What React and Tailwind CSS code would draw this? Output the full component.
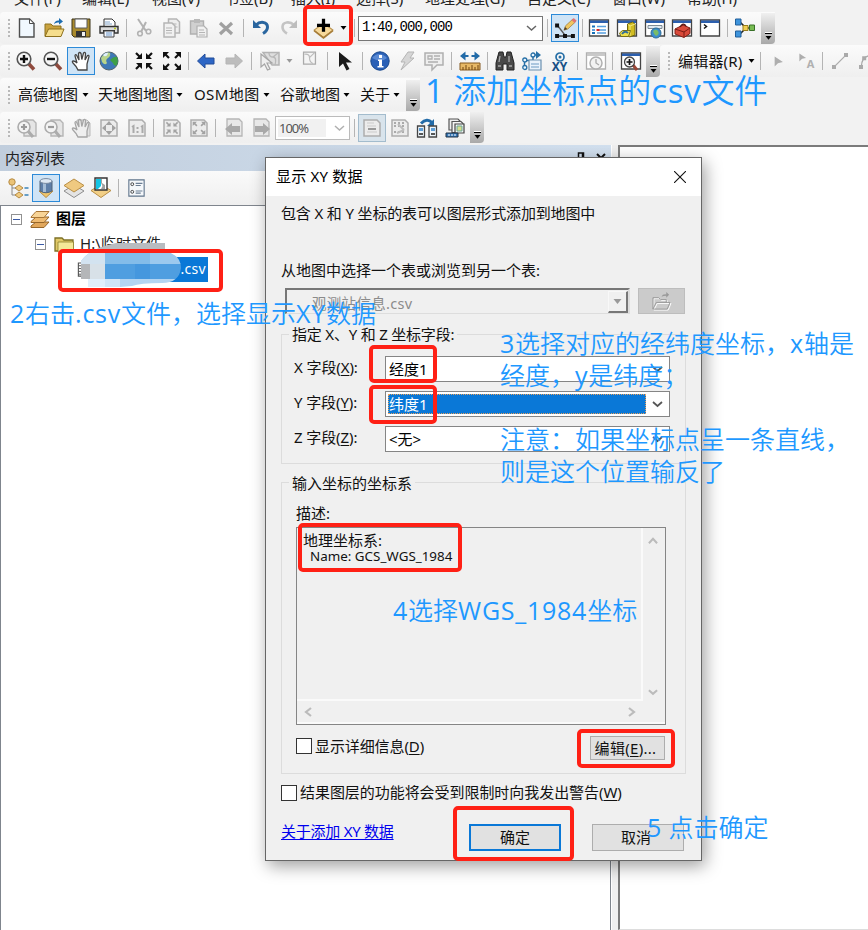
import React from "react";

const UI = "font-['Noto_Sans','Noto_Sans_CJK_SC',sans-serif]";
const NOTE = "font-['Open_Sans','Noto_Sans_CJK_SC',sans-serif]";

/* ---------- small building blocks ---------- */

function Ico({ children, className = "w-5 h-5" }) {
  return (
    <svg viewBox="0 0 20 20" className={`${className} shrink-0 overflow-visible`} fill="none">
      {children}
    </svg>
  );
}

function Slot({ w = "w-7", children }) {
  return <div className={`${w} flex h-full shrink-0 items-center justify-center`}>{children}</div>;
}

function Sep({ w = "w-[7px]" }) {
  return (
    <div className={`${w} flex h-full shrink-0 items-center justify-center`}>
      <div className="h-[18px] w-px bg-[#b4b4b4]" />
    </div>
  );
}

function Grip() {
  return (
    <div className="flex h-full w-[13px] shrink-0 flex-col items-center justify-center gap-[2px] pl-[5px]">
      {[0, 1, 2, 3, 4].map((i) => (
        <div key={i} className="size-[2px] bg-[#b9b9b9]" />
      ))}
    </div>
  );
}

function Caret({ color = "#000" }) {
  return (
    <svg viewBox="0 0 6 4" className="h-1 w-[7px] shrink-0">
      <path d="M0 0h6L3 3.8z" fill={color} />
    </svg>
  );
}

function Chevron({ className = "h-[6px] w-[11px]", color = "#666", d = "M1 1l4.5 4L10 1", sw = 1.5 }) {
  return (
    <svg viewBox="0 0 11 6" className={`${className} shrink-0 overflow-visible`} fill="none">
      <path d={d} stroke={color} strokeWidth={sw} />
    </svg>
  );
}

function Overflow() {
  return (
    <div className="flex h-[31px] w-[14px] shrink-0 flex-col items-center justify-end self-end rounded-br-sm bg-gradient-to-b from-[#f0f0f0] to-[#a9a9a9] pb-1">
      <div className="mb-[2px] h-[2px] w-[7px] border-t border-white bg-black" />
      <Caret />
    </div>
  );
}

function Pressed({ children, soft }) {
  return (
    <div
      className={`flex h-[28px] w-[28px] items-center justify-center border ${
        soft ? "border-[#a3bccd] bg-[#d9e4ec]" : "border-[#2c8ad8] bg-[#cfe4f6]"
      }`}
    >
      {children}
    </div>
  );
}

/* ---------- icons ---------- */

const NewDoc = () => (
  <Ico>
    <path d="M2.5 1h10l4.500 4.500V19H2.500z" fill="#f1f8fe" stroke="#4d4d4d" strokeWidth="1.400" />
    <path d="M12.500 1v4.500H17z" fill="#fff" stroke="#4d4d4d" />
  </Ico>
);
const OpenFolder = () => (
  <Ico>
    <path d="M1 18V6h6l2 2h8v10z" fill="#c9a23f" stroke="#8d701d" />
    <path d="M1 18.500L4.500 11H20l-3 7.500z" fill="#f5dd8c" stroke="#8d701d" />
    <path d="M10 6q1-4 5-3.500V0l4 3.500-4 3V4.500q-3-.5-5 1.500z" fill="#1d6db0" />
  </Ico>
);
const Save = () => (
  <Ico>
    <path d="M1 1h18v18H3l-2-2z" fill="#a98a2c" stroke="#3c3518" />
    <path d="M4 1h12v9H4z" fill="#fbfbfb" stroke="#5b5b5b" />
    <path d="M5 13h10v6H5z" fill="#333" />
    <path d="M11 14h3v4h-3z" fill="#f1f1f1" />
  </Ico>
);
const Printer = () => (
  <Ico>
    <path d="M5 8V1h8l3 3v5" fill="#fff" stroke="#333" />
    <path d="M6 4h5M6 6h7" stroke="#82a4c8" />
    <path d="M1 8.500h18V15H1z" fill="#dcdcdc" stroke="#333" strokeWidth="1.400" />
    <path d="M4 12h12v3H4z" fill="#333" />
    <path d="M5 13h10v6H5z" fill="#f4f8ff" stroke="#444" />
    <path d="M7 15h6M7 17h6" stroke="#6a94c5" />
    <path d="M15 10.500h2" stroke="#b8c61c" strokeWidth="1.500" />
  </Ico>
);
const Cut = () => (
  <Ico>
    <path d="M4 1l8 12M12 4l-5 10" stroke="#b2b2b2" strokeWidth="2" />
    <circle cx="6" cy="15.500" r="2.300" stroke="#b2b2b2" strokeWidth="1.600" />
    <circle cx="14.500" cy="13.500" r="2.300" stroke="#b2b2b2" strokeWidth="1.600" />
  </Ico>
);
const Copy = () => (
  <Ico>
    <path d="M6.500 1h8l3 3v11h-11z" fill="#eee" stroke="#b5b5b5" strokeWidth="1.500" />
    <path d="M8.500 6h6M8.500 9h7" stroke="#b5b5b5" />
    <path d="M2 5h8l3 3v11H2z" fill="#f1f1f1" stroke="#b5b5b5" strokeWidth="1.500" />
    <path d="M4 10h6M4 12.500h6M4 15h6" stroke="#b5b5b5" />
  </Ico>
);
const Paste = () => (
  <Ico>
    <path d="M1.500 3h13v13h-13z" fill="#d0d0d0" stroke="#b0b0b0" strokeWidth="1.400" />
    <path d="M5 1h6v4H5z" fill="#b9b9b9" />
    <path d="M8 8h7l3 3v8H8z" fill="#f0f0f0" stroke="#b0b0b0" strokeWidth="1.200" />
    <path d="M10 12h5M10 14.500h6M10 17h6" stroke="#b5b5b5" />
  </Ico>
);
const Del = () => (
  <Ico>
    <path d="M4 5l12 11M16 5L4 16" stroke="#a0a0a0" strokeWidth="3.200" />
  </Ico>
);
const Undo = () => (
  <Ico>
    <path d="M5 7C9 3 16.500 3.500 16.500 9q0 4-4.500 6.500" stroke="#2a669f" strokeWidth="3" />
    <path d="M2 2v8h8z" fill="#2a669f" />
  </Ico>
);
const Redo = () => (
  <Ico>
    <path d="M15 7C11 3 3.500 3.500 3.500 9q0 4 4.500 6.500" stroke="#c4c4c4" strokeWidth="2.600" />
    <path d="M18 2v8h-8z" fill="#bdbdbd" />
  </Ico>
);
const AddData = () => (
  <Ico className="h-[21px] w-[21px]">
    <path d="M1 11.500L10 5l9 6.500-9 7z" fill="#f7d99a" stroke="#b7904e" />
    <path d="M1 12l9 7 9-7" stroke="#a77d38" strokeWidth="1.400" />
    <path d="M10 .8v12.400M3.800 7h12.400" stroke="#000" strokeWidth="3.100" />
  </Ico>
);
const EditSketch = () => (
  <Ico className="h-[22px] w-[22px]">
    <path d="M3 7.500l7 9" stroke="#555" strokeWidth="1.300" />
    <path d="M2 17.300h16" stroke="#222" strokeWidth="1.200" />
    <path d="M1 6h3.600v3.600H1zM1 15.500h3.600v3.600H1zM8.200 15.500h3.600v3.600H8.200zM15.400 15.500H19v3.600h-3.600z" fill="#111" />
    <path d="M9 12l1.500-4L17 2l2.500 2.500-7 6.500z" fill="#efc660" stroke="#937030" strokeWidth=".6" />
    <path d="M16 2.800L18 .8l2.600 2.600-2 2z" fill="#e07474" />
    <path d="M9 12l1-3 2 2z" fill="#4a3b28" />
  </Ico>
);
const Frame = ({ children, bar = "#2c5fae", edge = "#444" }) => (
  <Ico>
    <path d="M.5 2h19v16H.5z" fill="#fff" stroke={edge} strokeWidth="1.300" />
    <path d="M1 2.500h18v2.500H1z" fill={bar} />
    {children}
  </Ico>
);
const TocWin = () => (
  <Frame>
    <path d="M3 8.500h3M3 15h3" stroke="#1771ba" strokeWidth="2" />
    <path d="M3 12h3" stroke="#58a0df" strokeWidth="2" />
    <path d="M8 8.500h9M8 12h9M8 15h9" stroke="#58a0df" strokeWidth="1.700" />
    <path d="M7.500 12h3" stroke="#d22" strokeWidth="2" />
  </Frame>
);
const CatalogWin = () => (
  <Frame>
    <path d="M10.500 6l5-2 2.500 2v11l-5.500 2-2-2z" fill="#d2bd22" stroke="#6e650c" />
    <path d="M11 6.500l2 1.500v10M13 8l5-2" stroke="#f3e87c" />
    <path d="M2.500 15l3-2.500h8l-2 6H4z" fill="#efe04a" stroke="#77701a" />
    <path d="M5 16q3-4 6-1" stroke="#336f99" strokeWidth="2" />
  </Frame>
);
const SearchWin = () => (
  <Frame>
    <path d="M3 7.500h14v3H3z" fill="#dfe9f2" stroke="#7e8a93" />
    <circle cx="11" cy="15" r="5" fill="#3b8dcf" stroke="#2c6b97" />
    <path d="M8 13q3-3 5 0t-2 5q-2-1-3-5z" fill="#79bc67" />
  </Frame>
);
const ToolboxWin = () => (
  <Frame>
    <path d="M3 11l8-4 7 3v5.500l-6 4-9-3.500z" fill="#d94a3a" stroke="#802118" />
    <path d="M3 11l9 3 6-4M12 14v5" stroke="#7b1c14" />
    <path d="M8 9q3-5 6-1" stroke="#5d1711" strokeWidth="1.300" />
  </Frame>
);
const PythonWin = () => (
  <Frame>
    <path d="M4 6.500L6.500 8.500 4 10.500" stroke="#111" strokeWidth="1.500" />
  </Frame>
);
const Model = () => (
  <Ico>
    <path d="M5 4l6 6-6 6M10 10h6" stroke="#222" strokeWidth="1.500" />
    <path d="M.5 1h5.500v6h-5.500zM.5 13h5.500v6h-5.500z" fill="#3e94dc" stroke="#205f9a" />
    <path d="M8 7.500h5v5H8z" fill="#f0ce51" stroke="#977c1a" />
    <path d="M14.500 7h5v5.500h-5z" fill="#78bc52" stroke="#387028" />
  </Ico>
);

const Zoom = ({ plus }) => (
  <Ico>
    <path d="M12 12l6 6.500" stroke="#8f4a3d" strokeWidth="3.600" />
    <circle cx="8" cy="8" r="6.800" fill="#f6f6f6" stroke="#555" strokeWidth="1.600" />
    <path d={plus ? "M4 8h8M8 4v8" : "M4 8h8"} stroke="#111" strokeWidth="2.400" />
  </Ico>
);
const handPath =
  "M7 19q-1-3-5-7-1.500-2 .5-2 2 .3 3.500 2L4 5q0-2 1.500-1L8 9 7.500 2.500Q8.500.500 10 2.500l.8 6L12.500 2q1.500-1.500 2 .5L14 9l2.500-4.500q1.500-.7 1.500 1l-2 7.500V19z";
const Hand = () => (
  <Ico>
    <path d={handPath} fill="#fff" stroke="#444" strokeWidth="1.300" />
  </Ico>
);
const Globe = () => (
  <Ico>
    <circle cx="10" cy="10" r="9" fill="#3e78b6" stroke="#51626e" />
    <path d="M2 7q5-7 9-5 1 3-2 5-3 2-1 5-2 3-5-1z" fill="#b8d48a" />
    <path d="M11 9q4-4 7-3 2 5-1 9-3-1-3-3z" fill="#3e9f46" />
    <path d="M4 4q3-3 5-2-1 4-4 3z" fill="#dff0ff" />
  </Ico>
);
const ArrowsIn = ({ c = "#111" }) => (
  <>
    <path d="M2 2l4 4M18 2l-4 4M2 18l4-4M18 18l-4-4" stroke={c} strokeWidth="2.200" />
    <path d="M8 2v6H2zM12 2v6h6zM8 18v-6H2zM12 18v-6h6z" fill={c} />
  </>
);
const ArrowsOut = ({ c = "#111" }) => (
  <>
    <path d="M3 3l4 4M17 3l-4 4M3 17l4-4M17 17l-4-4" stroke={c} strokeWidth="2.200" />
    <path d="M1 1h6L1 7zM19 1h-6l6 6zM1 19h6l-6-6zM19 19h-6l6-6z" fill={c} />
  </>
);
const Arrow = ({ left, gray }) => (
  <Ico>
    <path
      d={left ? "M1.500 10L9 3v4h9v6H9v4z" : "M18.500 10L11 3v4H2v6h9v4z"}
      fill={gray ? "#bdbdbd" : "#2d66c5"}
      stroke={gray ? "#b5b5b5" : "#234c98"}
    />
  </Ico>
);
const SelectFeat = () => (
  <Ico>
    <path d="M3 1.500h16V14h-7z" fill="#dedede" stroke="#b4b4b4" strokeWidth="1.500" />
    <path d="M9 2q0 4 4 4t2 8M13 6l5-4" stroke="#b8b8b8" strokeWidth="1.300" />
    <path d="M1 3v13l3.500-3 3 6 2.500-1-3-6h5z" fill="#eee" stroke="#a5a5a5" strokeWidth="1.200" />
  </Ico>
);
const ClearSel = () => (
  <Ico className="mb-1.5 h-[17px] w-[17px]">
    <path d="M3 2.500h14v14H3z" fill="#f4f4f4" stroke="#aaa" strokeWidth="1.500" />
    <path d="M4 5q6-1 6 4t4 7M10 9l6-6" stroke="#bbb" strokeWidth="1.300" />
  </Ico>
);
const Pointer = () => (
  <Ico>
    <path d="M4 1v15l4-3.500 3.500 7 3-1.500-3.500-6.500h6z" fill="#1a1a1a" />
  </Ico>
);
const Head = ({ cls }) => (
  <Ico className={cls}>
    <path d="M3 1v18l6-6 9-2z" fill="#aeaeae" />
  </Ico>
);
const Info = () => (
  <Ico>
    <circle cx="10" cy="10" r="9.200" fill="#2a60b6" stroke="#19488c" />
    <path d="M2 7q7-8 15 0-6 5-15 0z" fill="#6d9be0" opacity=".7" />
    <path d="M9 4h3v3H9zM8 8.500h4V15h1.500v1.500h-6V15H9v-5H8z" fill="#fff" />
  </Ico>
);
const Bolt = () => (
  <Ico>
    <path d="M11 1h6l-4 6h4L4 19l4-8H4z" fill="#d6d6d6" stroke="#b5b5b5" />
  </Ico>
);
const Popup = () => (
  <Ico>
    <path d="M1 2h18v12h-6l-5 5v-5H1z" fill="#efefef" stroke="#b0b0b0" strokeWidth="1.500" />
    <path d="M4 5h4v3H4zM10 5h6M10 8h6M4 11h10" stroke="#b0b0b0" strokeWidth="1.300" />
  </Ico>
);
const Ruler = () => (
  <Ico>
    <path d="M3 5h14" stroke="#226ba8" strokeWidth="2.200" strokeDasharray="5.500 3" />
    <path d="M0 5l5.500-4.500v9zM20 5l-5.500-4.500v9z" fill="#226ba8" />
    <path d="M0 12h20v7H0z" fill="#e7b865" stroke="#85581f" />
    <path d="M3 16v3M6 14v5M9 16v3M12 14v5M15 16v3M18 14v5" stroke="#704510" />
  </Ico>
);
const Binoculars = () => (
  <Ico>
    <path d="M4 1h4l1 5h2l1-5h4l3 11v7h-7v-6H8v6H1v-7z" fill="#494949" stroke="#222" />
    <path d="M4 11l1-6M14 11V5M3 15h3M14 15h3" stroke="#aaa" strokeWidth="1.300" />
  </Ico>
);
const Route = () => (
  <Ico>
    <path d="M2.500 16V9.500H11V4h4" stroke="#2870a7" strokeWidth="1.500" />
    <path d="M14 0l5 4-5 4z" fill="#2870a7" />
    <circle cx="2.800" cy="9" r="2" fill="#eaf6ff" stroke="#2870a7" strokeWidth="1.300" />
    <circle cx="2.800" cy="16.500" r="2" fill="#eaf6ff" stroke="#2870a7" strokeWidth="1.300" />
    <circle cx="11" cy="4" r="2" fill="#eaf6ff" stroke="#2870a7" strokeWidth="1.300" />
    <path d="M7 9h12v10H7z" fill="#e9f2fb" stroke="#6b90b0" strokeWidth="1.200" />
    <path d="M9 13h8M9 16h8" stroke="#6c9ac2" />
  </Ico>
);
const GotoXY = () => (
  <div className="flex flex-col items-center">
    <svg viewBox="0 0 10 10" className="size-[10px]" fill="none">
      <circle cx="5" cy="5" r="4" stroke="#2870a7" strokeWidth="1.700" />
      <circle cx="5" cy="5" r="1.500" fill="#2870a7" />
    </svg>
    <span className="font-['Noto_Sans',sans-serif] text-[12px] font-bold leading-[9px] text-[#174f86]">XY</span>
  </div>
);
const ClockWin = () => (
  <Frame bar="#c9c9c9" edge="#b0b0b0">
    <circle cx="10" cy="12" r="6" fill="#f3f3f3" stroke="#b0b0b0" strokeWidth="1.500" />
    <path d="M10 8v4l3 2" stroke="#aaa" strokeWidth="1.300" />
  </Frame>
);
const ViewerWin = () => (
  <Frame>
    <path d="M12 14l4 5" stroke="#9a4737" strokeWidth="3" />
    <circle cx="8.500" cy="11" r="5" fill="#f6f6f6" stroke="#444" strokeWidth="1.300" />
    <path d="M5.500 11h6M8.500 8v6" stroke="#111" strokeWidth="1.700" />
  </Frame>
);
const GrayPage = ({ children }) => (
  <Ico>
    <path d="M2 2h13l3 3v13H2z" fill="#ececec" stroke="#adadad" strokeWidth="1.500" />
    {children}
  </Ico>
);
const PageZoom = ({ plus }) => (
  <Ico>
    <path d="M7 2h9l3 3v13H7z" fill="#e5e5e5" stroke="#b5b5b5" strokeWidth="1.400" />
    <path d="M11 13l5 6" stroke="#acacac" strokeWidth="3" />
    <circle cx="7" cy="9" r="6" fill="#f3f3f3" stroke="#acacac" strokeWidth="1.600" />
    <path d={plus ? "M4 9h6M7 6v6" : "M4 9h6"} stroke="#9a9a9a" strokeWidth="2.200" />
  </Ico>
);
const PageHand = () => (
  <Ico>
    <path d="M6 2h10l3 3v13H6z" fill="#e2e2e2" stroke="#b9b9b9" />
    <path d={handPath} fill="#efefef" stroke="#a5a5a5" strokeWidth="1.300" />
  </Ico>
);
const PageFull = () => (
  <GrayPage>
    <path d="M10 3l3.500 4h-7zM10 17l3.500-4h-7zM3 10l4-3.500v7zM17 10l-4-3.500v7z" fill="#a2a2a2" />
  </GrayPage>
);
const Page11 = () => (
  <GrayPage>
    <path d="M5 9l1.500-1v7M14 9l1.500-1v7" stroke="#aaa" strokeWidth="2" />
    <path d="M9.500 9h2v2h-2zM9.500 13h2v2h-2z" fill="#aaa" />
  </GrayPage>
);
const PageArrow = ({ left }) => (
  <Ico>
    <path d="M3 1h12l3 3v14H3z" fill="#e8e8e8" stroke="#b5b5b5" strokeWidth="1.300" />
    <path d={left ? "M1 11l7-6v3h8v6H8v3z" : "M19 11l-7-6v3H4v6h8v3z"} fill="#a9a9a9" />
  </Ico>
);
const DraftPage = () => (
  <GrayPage>
    <path d="M5 5h7M5 8h9M5 14h10" stroke="#cbcbcb" />
    <path d="M6 11h8" stroke="#999" strokeWidth="2" />
  </GrayPage>
);
const FocusPage = () => (
  <GrayPage>
    <path d="M4 5h12M4 8h12M4 14h12" stroke="#aaa" strokeWidth="2" strokeDasharray="2 2" />
    <path d="M8 6l6 6M7 15l7-3" stroke="#bdbdbd" strokeWidth="2" />
  </GrayPage>
);
const SwapLayout = () => (
  <Ico>
    <path d="M4 5.500q6-6 11-1" stroke="#226ba8" strokeWidth="3" />
    <path d="M17 1v7h-7z" fill="#226ba8" />
    <path d="M.5 8h7v11h-7zM12 8h7.500v11H12z" fill="#eef5fb" stroke="#444" strokeWidth="1.300" />
    <path d="M2 10h4v3H2zM14 10h4v3h-4z" fill="#5e9fd8" />
    <path d="M2 16h4M14 16h4" stroke="#222" strokeWidth="1.500" />
  </Ico>
);
const DDP = () => (
  <Ico>
    <path d="M4 1h9l2 2v9H4z" fill="#eee" stroke="#555" strokeWidth="1.200" />
    <path d="M7 3.500h9l2 2v9H7z" fill="#f5f5f5" stroke="#555" strokeWidth="1.200" />
    <path d="M10 6h9v9h-9z" fill="#f4f6f2" stroke="#444" strokeWidth="1.200" />
    <path d="M12 8h5v5h-5z" fill="#d8df8a" stroke="#6aa59a" />
    <path d="M1 15h12v4H1z" fill="#3277b8" stroke="#234" />
    <path d="M3 17h8" stroke="#fff" strokeDasharray="2 1" />
  </Ico>
);

/* contents-panel icons */
const ByOrder = () => (
  <Ico>
    <path d="M4 4v13h6M4 10h6" stroke="#888" />
    <circle cx="4" cy="4" r="3.200" fill="#ebc377" stroke="#b68b43" />
    <path d="M7 10l4-3 4 3-4 3zM7 17l4-3 4 3-4 3z" fill="#efc97f" stroke="#b68b43" />
    <path d="M16.500 10h4M16.500 17h4" stroke="#3a82b8" strokeWidth="1.600" />
  </Ico>
);
const BySource = () => (
  <Ico>
    <path d="M3 13l7 6.500L17 13z" fill="#efc66d" stroke="#b68b43" />
    <path d="M4 3v10q6 3.500 12 0V3z" fill="#5e7fa8" stroke="#51657b" />
    <path d="M7 5v9h3V5z" fill="#a5bdd6" />
    <ellipse cx="10" cy="3" rx="6" ry="2.400" fill="#dfe9f3" stroke="#7789a0" />
  </Ico>
);
const ByVisible = () => (
  <Ico>
    <path d="M0 13l10-6 10 6-10 6.500z" fill="#e4e4e4" stroke="#8e8e8e" />
    <path d="M0 7.500L10 1l10 6.500L10 14z" fill="#efc980" stroke="#b98f46" />
  </Ico>
);
const BySelection = () => (
  <Ico>
    <path d="M0 12.500l10-6 10 6-10 7z" fill="#f2cf86" stroke="#b98f46" />
    <path d="M4 0h12v12H4z" fill="#fff" stroke="#333" strokeWidth="1.400" />
    <path d="M5 1h5v7l-3 3H5z" fill="#14c4e4" />
    <path d="M11 1v4l3 2v4h-4l1.500-3-1.500-3V1z" fill="#777" opacity=".7" />
  </Ico>
);
const Options = () => (
  <Ico className="h-[18px] w-[17px]">
    <path d="M1 0.500h18v19H1z" fill="#f5f8fb" stroke="#60758c" strokeWidth="1.300" />
    <circle cx="5" cy="5.500" r="1.700" stroke="#333" />
    <circle cx="5" cy="14.500" r="1.700" stroke="#333" />
    <path d="M9 4.500h8M9 7h6M9 13.500h8M9 16h6" stroke="#6b7e94" strokeWidth="1.300" />
  </Ico>
);
const Layers = () => (
  <Ico>
    <path d="M1 17l5-4h13l-5 5.500H1z" fill="#e2a85d" stroke="#96662a" />
    <path d="M1 12.500l5-4.500h13l-5 5.500H1z" fill="#efbb72" stroke="#96662a" />
    <path d="M1 8l5-5.500h13L14 8.500H1z" fill="#f8d497" stroke="#a97636" />
  </Ico>
);
const Folder = () => (
  <Ico>
    <path d="M1 17V4h7l2 2h9v11z" fill="#e0c968" stroke="#7d7026" strokeWidth="1.300" />
    <path d="M4 18V8h15.500v10z" fill="#f4e898" stroke="#8e812e" strokeWidth=".8" />
  </Ico>
);

function Expander() {
  return (
    <div className="flex size-[11px] shrink-0 items-center justify-center border border-[#919191] bg-white">
      <div className="h-px w-[7px] bg-[#3b5aa5]" />
    </div>
  );
}

/* ---------- toolbars ---------- */

const menus = [
  ["文件(F)", "w-[68px]"],
  ["编辑(E)", "w-[70px]"],
  ["视图(V)", "w-[72px]"],
  ["书签(B)", "w-[67px]"],
  ["插入(I)", "w-[65px]"],
  ["选择(S)", "w-[69px]"],
  ["地理处理(G)", "w-[102px]"],
  ["自定义(C)", "w-[85px]"],
  ["窗口(W)", "w-[75px]"],
  ["帮助(H)", "w-[60px]"],
];

const Strip = "bg-gradient-to-b from-[#fbfbfb] to-[#efefef] rounded-l-sm";

function Toolbars() {
  return (
    <div className="flex h-[145px] shrink-0 flex-col overflow-hidden bg-[#f2f2f2]">
      <div className="flex h-[12px] shrink-0 items-end overflow-hidden pb-[5px] pl-[14px] text-[15px] leading-[17px] text-[#222]">
        {menus.map(([t, w]) => (
          <span key={t} className={`${w} shrink-0 whitespace-nowrap`}>
            {t}
          </span>
        ))}
      </div>

      <div className="flex h-[33px] shrink-0">
        <div className={`flex h-[32px] items-center ${Strip}`}>
          <Grip />
          <Slot w="w-[27px]"><NewDoc /></Slot>
          <Slot w="w-[27px]"><OpenFolder /></Slot>
          <Slot><Save /></Slot>
          <Slot><Printer /></Slot>
          <Sep />
          <Slot><Cut /></Slot>
          <Slot w="w-[27px]"><Copy /></Slot>
          <Slot><Paste /></Slot>
          <Slot w="w-[26px]"><Del /></Slot>
          <Sep w="w-2" />
          <Slot><Undo /></Slot>
          <Slot w="w-[27px]"><Redo /></Slot>
          <div className="w-[7px]" />
          <Slot><AddData /></Slot>
          <Slot w="w-[13px]"><Caret /></Slot>
          <Sep w="w-2" />
          <div className="flex h-[25px] w-[185px] items-center justify-between border border-[#777] bg-white pl-[3px] pr-[5px] font-['Liberation_Mono',monospace] text-[14px] text-black">
            <span className="-mt-px tracking-[-0.9px]">1:40,000,000</span>
            <Chevron />
          </div>
          <Sep w="w-2" />
          <Pressed><EditSketch /></Pressed>
          <Sep w="w-[6px]" />
          <Slot><TocWin /></Slot>
          <Slot><CatalogWin /></Slot>
          <Slot w="w-[27px]"><SearchWin /></Slot>
          <Slot><ToolboxWin /></Slot>
          <Slot><PythonWin /></Slot>
          <Sep />
          <Slot><Model /></Slot>
          <div className="w-[2px]" />
          <Overflow />
        </div>
      </div>

      <div className="flex h-[33px] shrink-0">
        <div className={`flex h-[32px] items-center ${Strip}`}>
          <Grip />
          <Slot w="w-[26px]"><Zoom plus /></Slot>
          <Slot><Zoom /></Slot>
          <Pressed><Hand /></Pressed>
          <Slot><Globe /></Slot>
          <Sep />
          <Slot><Ico><ArrowsIn /></Ico></Slot>
          <Slot w="w-[27px]"><Ico><ArrowsOut /></Ico></Slot>
          <Sep />
          <Slot><Arrow left /></Slot>
          <Slot w="w-[27px]"><Arrow gray /></Slot>
          <Sep w="w-2" />
          <div className="w-[1px]" />
          <Slot><SelectFeat /></Slot>
          <Slot w="w-[11px]"><Caret color="#999" /></Slot>
          <Slot w="w-[29px]"><ClearSel /></Slot>
          <Sep />
          <Slot><Pointer /></Slot>
          <Sep />
          <Slot w="w-[27px]"><Info /></Slot>
          <Slot w="w-[27px]"><Bolt /></Slot>
          <Slot><Popup /></Slot>
          <Sep />
          <Slot w="w-[29px]"><Ruler /></Slot>
          <Sep />
          <Slot w="w-[27px]"><Binoculars /></Slot>
          <Slot><Route /></Slot>
          <Slot w="w-[27px]"><GotoXY /></Slot>
          <Sep w="w-[8px]" />
          <Slot w="w-[29px]"><ClockWin /></Slot>
          <Sep w="w-[5px]" />
          <Slot w="w-[31px]"><ViewerWin /></Slot>
          <Overflow />
        </div>
        <div className={`flex h-[32px] flex-1 items-center overflow-hidden ${Strip}`}>
          <Grip />
          <span className="ml-[5px] w-[67px] shrink-0 whitespace-nowrap text-[15px] tracking-[0.2px] text-[#111]">编辑器(R)</span>
          <Slot w="w-[13px]"><Caret /></Slot>
          <Sep w="w-[5px]" />
          <Slot w="w-[30px]"><Head cls="h-[13px] w-[11px]" /></Slot>
          <Slot w="w-[26px]">
            <Head cls="mb-2 h-[11px] w-[9px]" />
            <span className="mt-1.5 text-[11px] font-bold text-[#b0b0b0]">A</span>
          </Slot>
          <Sep w="w-[6px]" />
          <Slot w="w-[30px]">
            <Ico className="h-4 w-4">
              <path d="M3 17L17 3" stroke="#aaa" strokeWidth="1.500" />
              <path d="M0 15h5v5H0zM15 0h5v5h-5z" fill="#aaa" />
            </Ico>
          </Slot>
          <Slot w="w-[24px]">
            <Ico className="h-4 w-4">
              <path d="M3 17q0-14 14-14" stroke="#aaa" strokeWidth="1.500" />
              <path d="M0 15h5v5H0zM4 4h5v5H4z" fill="#aaa" />
            </Ico>
          </Slot>
        </div>
      </div>

      <div className="flex h-[34px] shrink-0">
        <div className={`flex h-[33px] items-center whitespace-nowrap text-[15px] text-[#111] ${Strip}`}>
          <Grip />
          <span className="ml-[5px] w-[61px]">高德地图</span>
          <Slot w="w-[13px]"><Caret /></Slot>
          <span className="ml-[6px] w-[75px]">天地图地图</span>
          <Slot w="w-[13px]"><Caret /></Slot>
          <span className="ml-[8px] w-[66px] tracking-[0.4px]">OSM地图</span>
          <Slot w="w-[13px]"><Caret /></Slot>
          <span className="ml-[7px] w-[60px]">谷歌地图</span>
          <Slot w="w-[13px]"><Caret /></Slot>
          <span className="ml-[7px] w-[30px]">关于</span>
          <Slot w="w-[13px]"><Caret /></Slot>
          <div className="w-[3px]" />
          <Overflow />
        </div>
      </div>

      <div className="flex h-[32px] shrink-0">
        <div className={`flex h-[31px] items-center ${Strip}`}>
          <Grip />
          <Slot w="w-[27px]"><PageZoom plus /></Slot>
          <Slot w="w-[27px]"><PageZoom /></Slot>
          <Slot><PageHand /></Slot>
          <Slot><PageFull /></Slot>
          <Slot w="w-[27px]"><Page11 /></Slot>
          <Sep />
          <Slot w="w-[29px]"><GrayPage><g transform="translate(3 3) scale(.7)"><ArrowsIn c="#a2a2a2" /></g></GrayPage></Slot>
          <Slot w="w-[26px]"><GrayPage><g transform="translate(3 3) scale(.7)"><ArrowsOut c="#a2a2a2" /></g></GrayPage></Slot>
          <Sep />
          <Slot w="w-[29px]"><PageArrow left /></Slot>
          <Slot w="w-[26px]"><PageArrow /></Slot>
          <div className="ml-[1px] flex h-[24px] w-[75px] items-center justify-between border border-[#bbb] bg-white pl-[2px] pr-[4px]">
            <span className="w-[48px] bg-[#f1f1f1] pl-px text-[13px] leading-[18px] tracking-[-1px] text-[#555]">100%</span>
            <Chevron color="#b0b0b0" />
          </div>
          <Sep w="w-2" />
          <Pressed soft><DraftPage /></Pressed>
          <Slot w="w-[27px]"><FocusPage /></Slot>
          <Slot><SwapLayout /></Slot>
          <Slot w="w-[27px]"><DDP /></Slot>
          <div className="w-[2px]" />
          <Overflow />
        </div>
      </div>
    </div>
  );
}

/* ---------- table of contents panel ---------- */

function ContentsPanel() {
  return (
    <div className="flex w-[611px] shrink-0 flex-col">
      <div className="flex h-[26px] shrink-0 items-center justify-between bg-gradient-to-r from-[#c1cedd] to-[#d3e1f0] pl-[5px] pr-[5px] text-[15px] text-[#222]">
        <span>内容列表</span>
        <div className="flex items-center gap-[10px]">
          <svg viewBox="0 0 10 14" className="h-3.5 w-2.5" fill="none">
            <path d="M2.500 9V2h5v7M0 9.500h10M5 10v4M6.500 2v7" stroke="#111" strokeWidth="1.500" />
          </svg>
          <svg viewBox="0 0 10 10" className="size-2.5" fill="none">
            <path d="M1 1l8 8M9 1L1 9" stroke="#111" strokeWidth="2" />
          </svg>
        </div>
      </div>
      <div className="flex h-[34px] shrink-0 items-center bg-gradient-to-b from-[#fafafa] to-[#efefef] pl-[4px]">
        <Slot><ByOrder /></Slot>
        <Pressed><BySource /></Pressed>
        <Slot w="w-[27px]"><ByVisible /></Slot>
        <Slot><BySelection /></Slot>
        <Sep w="w-[6px]" />
        <Slot w="w-[30px]"><Options /></Slot>
      </div>
      <div className="flex flex-1 flex-col border border-b-0 border-[#7f858d] bg-white text-[15px] text-[#222]">
        <div className="flex h-[26px] items-center pl-[10px]">
          <Expander />
          <div className="ml-[8px] flex"><Layers /></div>
          <span className="-mt-[2px] ml-[6px] font-bold text-black">图层</span>
        </div>
        <div className="flex h-[24px] items-center pl-[34px]">
          <Expander />
          <div className="ml-[8px] flex"><Folder /></div>
          <span className="-mt-px ml-[6px] whitespace-nowrap tracking-[0.1px]">H:\临时文件</span>
        </div>
        <div className="relative flex h-[26px] items-center pl-[76px]">
          <svg viewBox="0 0 14 16" className="h-[15px] w-[14px]" fill="none">
            <path d="M1 1h12v14H1z" fill="#fff" stroke="#555" strokeWidth="1.200" />
            <path d="M1 4h12M1 7h12M1 10h12M1 13h12" stroke="#555" />
          </svg>
          <div className="ml-[2px] flex h-[25px] w-[115px] items-center justify-end bg-[#0a78d7] pb-px pr-[2px] text-[14px] tracking-[0.3px] text-white">.csv</div>
          {/* mosaic smear hiding the file name */}
          <svg viewBox="0 0 104 46" className="absolute -top-[13px] left-[79px] h-[46px] w-[104px]">
            <defs>
              <clipPath id="smear">
                <path d="M36 0H85V8Q101 12 101 25 99 40 82 40Q60 40 52 43L40 44H8V36H1V18Q10 5 36 0z" />
              </clipPath>
            </defs>
            <g clipPath="url(#smear)">
              <path d="M0 0h104v10H0z" fill="#b8bcc0" />
              <path d="M0 7h104v14H0z" fill="#9cc9ee" />
              <path d="M0 7h25v14H0z" fill="#d3e3f0" />
              <path d="M25 10h45v11H25z" fill="#83bce9" />
              <path d="M0 21h104v15H0z" fill="#4f9ee0" />
              <path d="M0 21h10v15H0z" fill="#b4b6b8" />
              <path d="M10 21h15v15H10z" fill="#d8e1e8" />
              <path d="M55 21h15v15H55z" fill="#4597de" />
              <path d="M0 36h104v10H0z" fill="#b4d5f2" />
              <path d="M0 36h25v10H0z" fill="#e1effb" />
              <path d="M25 36h15v10H25z" fill="#d0e5f7" />
            </g>
          </svg>
        </div>
      </div>
    </div>
  );
}

/* ---------- dialog ---------- */

function Select({ children, selected }) {
  return (
    <div className="flex h-[26px] w-[285px] items-center border border-[#858585] bg-white">
      <div
        className={`ml-[2px] flex h-[20px] w-[258px] items-center text-[15px] ${
          selected ? "border border-dotted border-[#e9a15c] bg-[#0a78d7] text-white" : "pl-px text-black"
        }`}
      >
        {children}
      </div>
      <div className="flex flex-1 items-center justify-center">
        <Chevron color="#555" sw={1.7} />
      </div>
    </div>
  );
}

function FieldRow({ k, children, selected, className }) {
  return (
    <div className={`flex h-[26px] ${className}`}>
      <span className="w-[91px] -translate-y-[2px] whitespace-nowrap leading-[26px] tracking-[-0.1px]">
        {k} 字段(<u className="underline-offset-2">{k}</u>):
      </span>
      <Select selected={selected}>{children}</Select>
    </div>
  );
}

const Legend = "ml-[7px] w-fit bg-[#f0f0f0] px-[3px] leading-[22px] whitespace-nowrap";

function Dialog() {
  return (
    <div className="absolute left-[265px] top-[157px] flex h-[704px] w-[437px] flex-col border border-[#666] bg-[#f0f0f0] text-[15px] text-[#111] shadow-[3px_5px_16px_rgba(0,0,0,0.38)]">
      <div className="flex h-[38px] shrink-0 items-center justify-between bg-white pl-[10px] pr-[15px] text-black">
        <span className="-mt-[2px] tracking-[0.2px]">显示 XY 数据</span>
        <svg viewBox="0 0 12 12" className="size-3" fill="none">
          <path d="M0 0l12 12M12 0L0 12" stroke="#111" strokeWidth="1.100" />
        </svg>
      </div>

      <div className="flex flex-col pl-[15px]">
        <div className="mt-[6px] h-[22px] whitespace-nowrap leading-[22px] tracking-[-0.15px]">包含 X 和 Y 坐标的表可以图层形式添加到地图中</div>
        <div className="mt-[35px] h-[22px] whitespace-nowrap leading-[22px]">从地图中选择一个表或浏览到另一个表:</div>
        <div className="mt-[7px] flex items-start">
          <div className="ml-[4px] flex h-[26px] w-[345px] items-center justify-between border-2 border-b border-[#777] border-b-[#ddd] border-r-[#ddd]">
            <span className="mt-1 pl-[25px] text-[14.500px] tracking-[0.3px] text-[#8b8b8b]">观测站信息.csv</span>
            <div className="flex h-[22px] w-[20px] items-center justify-center border border-b-2 border-r-2 border-[#f8f8f8] border-b-[#777] border-r-[#777]">
              <svg viewBox="0 0 8 5" className="h-[5px] w-[9px]"><path d="M0 0h8L4 5z" fill="#999" /></svg>
            </div>
          </div>
          <div className="ml-[8px] flex h-[26px] w-[47px] items-center justify-center border border-[#bdbdbd] bg-[#cbcbcb]">
            <Ico className="h-[19px] w-[21px]">
              <path d="M1 18V6h6l2 2h6v3M1 18L4.500 11H19l-3 7H1z" stroke="#fff" transform="translate(1 1)" />
              <path d="M1 18V6h6l2 2h6v3M1 18L4.500 11H19l-3 7H1z" stroke="#999" />
              <path d="M10 5q1-3 5-2.500V0l3 3-3 3V4q-3 0-5 1z" fill="#999" />
            </Ico>
          </div>
        </div>

        <div className="mt-[20px] h-[130px] w-[405px] border border-[#dcdcdc]">
          <div className={`-mt-[12px] h-[23px] tracking-[-0.2px] ${Legend}`}>指定 X、Y 和 Z 坐标字段:</div>
          <div className="pl-[12px]">
            <FieldRow k="X" className="mt-[10px]">经度1</FieldRow>
            <FieldRow k="Y" selected className="mt-[9px]">纬度1</FieldRow>
            <FieldRow k="Z" className="mt-[9px]">&lt;无&gt;</FieldRow>
          </div>
        </div>

        <div className="mt-[18px] h-[292px] w-[405px] border border-[#dcdcdc]">
          <div className={`-mt-[11px] h-[22px] ${Legend}`}>输入坐标的坐标系</div>
          <div className="flex flex-col pl-[14px]">
            <div className="mt-[8px] h-[22px] leading-[22px]">描述:</div>
            <div className="mt-[3px] flex h-[198px] w-[370px] flex-col border border-[#858585]">
              <div className="flex flex-1">
                <div className="flex-1 border-b-2 border-r-2 border-[#fafafa] pl-[6px] pt-[3px]">
                  <div className="leading-[18px]">地理坐标系:</div>
                  <div className="pl-[7px] text-[13.400px] leading-[15px]">Name: GCS_WGS_1984</div>
                </div>
                <div className="flex w-[22px] flex-col items-center justify-between pb-[6px] pr-[2px] pt-[10px]">
                  <Chevron color="#bbb" sw={2.2} className="h-[6px] w-[10px]" d="M1 5.500l4.500-5 4.500 5" />
                  <Chevron color="#bbb" sw={2.2} className="h-[6px] w-[10px]" />
                </div>
              </div>
              <div className="flex h-[23px] items-center justify-between border-b-2 border-[#fafafa] pl-[7px] pr-[29px]">
                <svg viewBox="0 0 8 10" className="h-[10px] w-2" fill="none"><path d="M7 1L2 5l5 4" stroke="#bbb" strokeWidth="2.200" /></svg>
                <svg viewBox="0 0 8 10" className="h-[10px] w-2" fill="none"><path d="M1 1l5 4-5 4" stroke="#bbb" strokeWidth="2.200" /></svg>
              </div>
            </div>
            <div className="mt-[10px] flex items-start">
              <div className="mt-[3px] size-[16px] border border-[#333] bg-white" />
              <span className="ml-[3px] w-[275px] whitespace-nowrap leading-[22px] tracking-[-0.1px]">
                显示详细信息(<u className="underline-offset-2">D</u>)
              </span>
              <button className="mt-px flex h-[24px] w-[75px] items-center justify-center whitespace-nowrap border border-[#adadad] bg-[#e1e1e1] pr-1 tracking-[0.3px]">
                编辑(<u className="underline-offset-2">E</u>)...
              </button>
            </div>
          </div>
        </div>

        <div className="mt-[8px] flex h-[22px] items-center">
          <div className="size-[16px] border border-[#333] bg-white" />
          <span className="-mt-px ml-[3px] whitespace-nowrap tracking-[-0.05px]">
            结果图层的功能将会受到限制时向我发出警告(<u className="underline-offset-2">W</u>)
          </span>
        </div>

        <div className="mt-[20px] flex items-start">
          <span className="-mt-[4px] w-[188px] whitespace-nowrap leading-[22px] tracking-[-0.25px] text-[#0000ee] underline underline-offset-2">
            关于添加 XY 数据
          </span>
          <button className="flex h-[27px] w-[92px] items-center justify-center border-2 border-[#0a78d7] bg-[#e1e1e1]">确定</button>
          <button className="ml-[31px] flex h-[27px] w-[92px] items-center justify-center border border-[#adadad] bg-[#e1e1e1] pr-1">取消</button>
        </div>
      </div>
    </div>
  );
}

/* ---------- tutorial mark-up drawn over the windows ---------- */

const marks = [
  "left-[303px] top-[5px] w-[50px] h-[41px]",
  "left-[58px] top-[249px] w-[165px] h-[43px]",
  "left-[369px] top-[345px] w-[68px] h-[38px]",
  "left-[369px] top-[385px] w-[68px] h-[39px]",
  "left-[298px] top-[523px] w-[164px] h-[49px]",
  "left-[577px] top-[729px] w-[98px] h-[39px]",
  "left-[453px] top-[806px] w-[121px] h-[55px]",
];

const notes = [
  ["1 添加坐标点的csv文件", "left-[425px] top-[67px] text-[33px] leading-[48px]"],
  ["2右击.csv文件，选择显示XY数据", "left-[10px] top-[295px] text-[25px] leading-[36px]"],
  ["3选择对应的经纬度坐标，x轴是", "left-[500px] top-[325px] text-[25px] leading-[36px]"],
  ["经度，y是纬度；", "left-[500px] top-[357px] text-[25px] leading-[36px]"],
  ["注意：如果坐标点呈一条直线，", "left-[500px] top-[421px] text-[25px] leading-[36px]"],
  ["则是这个位置输反了", "left-[500px] top-[453px] text-[25px] leading-[36px]"],
  ["4选择WGS_1984坐标", "left-[393px] top-[592px] text-[25px] leading-[36px]"],
  ["5 点击确定", "left-[647px] top-[809px] text-[25px] leading-[36px]"],
];

/* Latin runs are set at regular weight, Han runs slightly lighter. */
function Note({ text }) {
  return text.split(/([\x21-\x7e]+)/).map((part, i) => (
    <span key={i} className={i % 2 ? "font-normal tracking-[0.75px]" : "font-[350]"}>
      {part}
    </span>
  ));
}

export default function App() {
  return (
    <div className={`relative flex h-[930px] w-[868px] flex-col overflow-hidden bg-[#f0f0f0] ${UI}`}>
      <Toolbars />
      <div className="flex flex-1">
        <ContentsPanel />
        <div className="w-[7px] shrink-0 border-l border-[#fff] bg-[#f0f0f0]" />
        <div className="flex-1 border-b border-l-2 border-t-2 border-[#7b7b7b] border-b-[#ddd] bg-white" />
      </div>
      <Dialog />
      {marks.map((m) => (
        <div key={m} className={`absolute rounded-[5px] border-4 border-[#ff2015] ${m}`} />
      ))}
      {notes.map(([t, c]) => (
        <div key={t} className={`absolute whitespace-nowrap text-[#1e98ff] ${NOTE} ${c}`}>
          <Note text={t} />
        </div>
      ))}
    </div>
  );
}
